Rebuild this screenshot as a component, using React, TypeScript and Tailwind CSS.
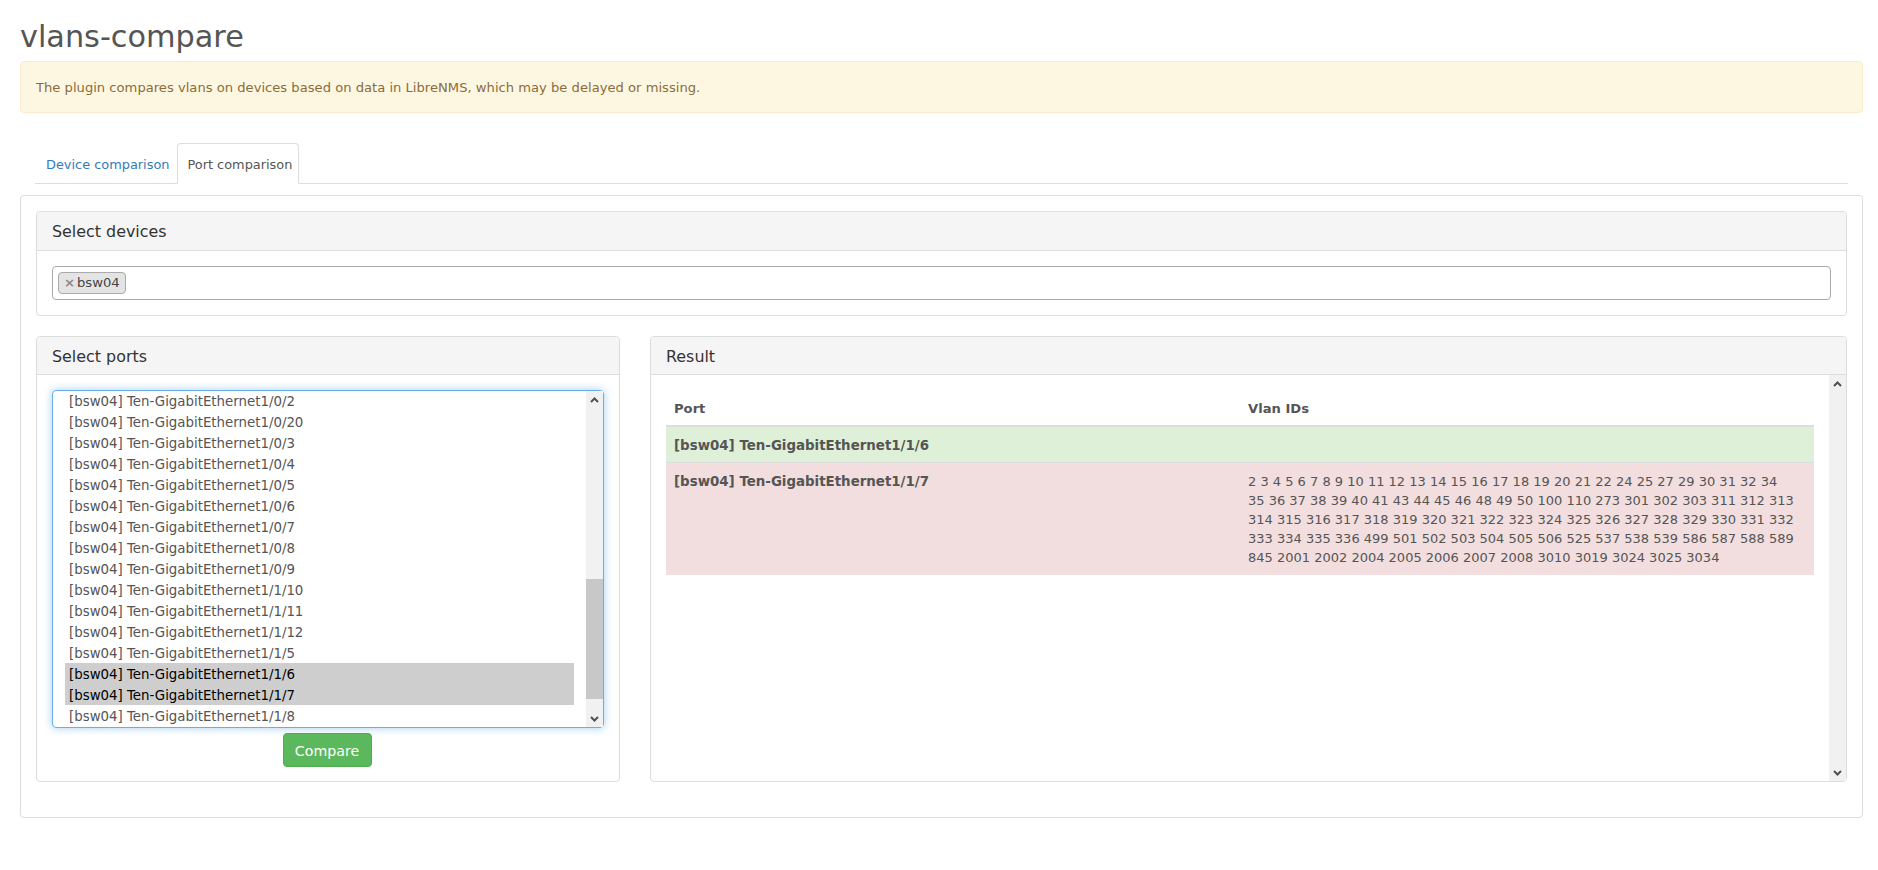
const PORTS = [
  '[bsw04] Ten-GigabitEthernet1/0/2',
  '[bsw04] Ten-GigabitEthernet1/0/20',
  '[bsw04] Ten-GigabitEthernet1/0/3',
  '[bsw04] Ten-GigabitEthernet1/0/4',
  '[bsw04] Ten-GigabitEthernet1/0/5',
  '[bsw04] Ten-GigabitEthernet1/0/6',
  '[bsw04] Ten-GigabitEthernet1/0/7',
  '[bsw04] Ten-GigabitEthernet1/0/8',
  '[bsw04] Ten-GigabitEthernet1/0/9',
  '[bsw04] Ten-GigabitEthernet1/1/10',
  '[bsw04] Ten-GigabitEthernet1/1/11',
  '[bsw04] Ten-GigabitEthernet1/1/12',
  '[bsw04] Ten-GigabitEthernet1/1/5',
  '[bsw04] Ten-GigabitEthernet1/1/6',
  '[bsw04] Ten-GigabitEthernet1/1/7',
  '[bsw04] Ten-GigabitEthernet1/1/8',
]
const SELECTED = ['[bsw04] Ten-GigabitEthernet1/1/6', '[bsw04] Ten-GigabitEthernet1/1/7']

// wrapped the same way as the screenshot
const VLAN_LINES = [
  '2 3 4 5 6 7 8 9 10 11 12 13 14 15 16 17 18 19 20 21 22 24 25 27 29 30 31 32 34',
  '35 36 37 38 39 40 41 43 44 45 46 48 49 50 100 110 273 301 302 303 311 312 313',
  '314 315 316 317 318 319 320 321 322 323 324 325 326 327 328 329 330 331 332',
  '333 334 335 336 499 501 502 503 504 505 506 525 537 538 539 586 587 588 589',
  '845 2001 2002 2004 2005 2006 2007 2008 3010 3019 3024 3025 3034',
]

function Arrow({ up }: { up?: boolean }) {
  return (
    <div className="h-[17px] flex items-center justify-center">
      <svg width="9" height="6" viewBox="0 0 9 6" fill="none" stroke="#505050" strokeWidth="2">
        <path d={up ? 'M1 5l3.5-3.5L8 5' : 'M1 1l3.5 3.5L8 1'} />
      </svg>
    </div>
  )
}

function Heading({ title, tall }: { title: string; tall?: boolean }) {
  return (
    <div
      className={`${tall ? 'h-[39px]' : 'h-[38px]'} pt-[2px] px-[15px] flex items-center bg-[#f5f5f5] border-b border-[#ddd] rounded-t-[3px] text-[15.9px] text-[#333]`}
    >
      {title}
    </div>
  )
}

export default function App() {
  return (
    <div className="bg-white min-h-[870px] pl-5 pr-[15px] font-['DejaVu_Sans',sans-serif] text-[13.13px] text-[#555]">
      <h1 className="h-[61px] pt-[17px] text-[30.3px] leading-[40px] text-[#555]">vlans-compare</h1>

      <div className="h-[52px] pt-[1px] px-[15px] flex items-center bg-[#fdf7e1] border border-[#faebcc] rounded text-[#8a6d3b]">
        The plugin compares vlans on devices based on data in LibreNMS, which may be delayed or missing.
      </div>

      <div className="mt-[30px] ml-[15px] mr-[15px] h-[41px] flex items-end border-b border-[#ddd] text-[12.9px]">
        <a className="h-[40px] pt-[4px] pl-[11px] pr-[8px] flex items-center text-[#337ab7]">Device comparison</a>
        <a className="h-[41px] -mb-px pt-[2px] pl-[9px] pr-[6px] flex items-center bg-white border border-[#ddd] border-b-white rounded-t text-[#555]">
          Port comparison
        </a>
      </div>

      <div className="mt-[11px] h-[623px] pt-[15px] px-[15px] border border-[#ddd] rounded">
        <div className="h-[105px] border border-[#ddd] rounded">
          <Heading title="Select devices" tall />
          <div className="pt-[15px] px-[15px]">
            <div className="h-[34px] px-[5px] flex items-center border border-[#aaa] rounded">
              <span className="h-[22px] px-[5px] flex items-center gap-[2px] bg-[#e4e4e4] border border-[#aaa] rounded text-[#444]">
                <span className="text-[#888] font-bold">×</span>bsw04
              </span>
            </div>
          </div>
        </div>

        <div className="mt-[20px] flex gap-[30px]">
          <div className="w-[584px] h-[446px] border border-[#ddd] rounded">
            <Heading title="Select ports" />
            <div className="px-[15px] pt-[15px]">
              <div className="h-[338px] flex border border-[#66afe9] rounded shadow-[0_0_8px_rgba(102,175,233,0.6)] text-[13.35px]">
                <ul className="flex-1 -mt-px pl-[12px] pr-[12px]">
                  {PORTS.map((p) => (
                    <li
                      key={p}
                      className={`h-[21px] pt-[2px] px-[4px] flex items-center ${SELECTED.includes(p) ? 'bg-[#cecece] text-black' : ''}`}
                    >
                      {p}
                    </li>
                  ))}
                </ul>
                <div className="w-[17px] flex flex-col bg-[#f1f1f1]">
                  <Arrow up />
                  <div className="h-[171px]" />
                  <div className="h-[120px] bg-[#c8c8c8]" />
                  <div className="h-[11px]" />
                  <Arrow />
                </div>
              </div>
              <div className="mt-[5px] pr-[2px] flex justify-center">
                <button className="h-[34px] w-[89px] pt-[3px] bg-[#5cb85c] border border-[#4cae4c] rounded text-white text-[14.2px]">
                  Compare
                </button>
              </div>
            </div>
          </div>

          <div className="flex-1 h-[446px] border border-[#ddd] rounded flex flex-col">
            <Heading title="Result" />
            <div className="flex-1 flex">
              <div className="flex-1 pl-[15px] pr-[15px] pt-[15px]">
                <table className="w-full table-fixed">
                  <thead>
                    <tr className="h-[36px] border-b-2 border-[#ddd] text-left">
                      <th className="w-1/2 pt-[3px] px-[8px] font-bold">Port</th>
                      <th className="pt-[3px] px-[8px] font-bold">Vlan IDs</th>
                    </tr>
                  </thead>
                  <tbody>
                    <tr className="h-[36px] bg-[#dff0d8] border-b border-[#ddd]">
                      <td className="pt-[4px] px-[8px] font-bold text-[13.38px]">[bsw04] Ten-GigabitEthernet1/1/6</td>
                      <td className="px-[8px]"></td>
                    </tr>
                    <tr className="bg-[#f2dede]">
                      <td className="pt-[9px] pb-[8px] px-[8px] align-top font-bold text-[13.38px] leading-[19px]">[bsw04] Ten-GigabitEthernet1/1/7</td>
                      <td className="pt-[9px] pb-[8px] px-[8px] text-[13px] leading-[19px]">
                        {VLAN_LINES.map((l) => (
                          <div key={l} className="whitespace-nowrap">{l}</div>
                        ))}
                      </td>
                    </tr>
                  </tbody>
                </table>
              </div>
              <div className="w-[17px] flex flex-col justify-between bg-[#f1f1f1]">
                <Arrow up />
                <Arrow />
              </div>
            </div>
          </div>
        </div>
      </div>
    </div>
  )
}
